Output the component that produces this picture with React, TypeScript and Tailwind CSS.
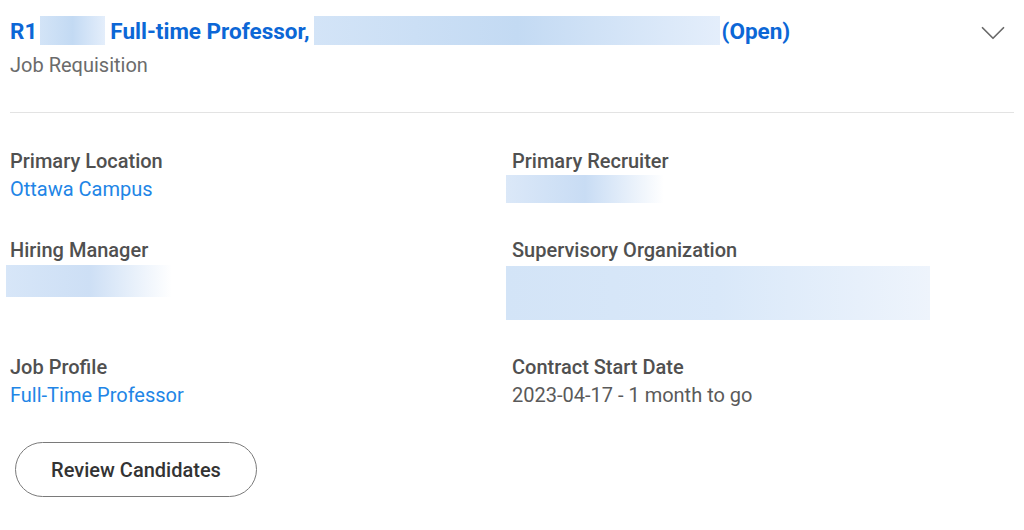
import { ChevronDown } from 'lucide-react';

function Redacted({ className }: { className: string }) {
  return (
    <span
      className={`inline-block bg-linear-to-r from-[#d3e4f7] via-[#c3daf3] to-[#e4eefb] ${className}`}
    />
  );
}

function Field({ label, children }: { label: string; children: React.ReactNode }) {
  return (
    <div className="flex flex-col">
      <p className="text-[20px] font-medium leading-[28px] text-[#505050]">{label}</p>
      {children}
    </div>
  );
}

export default function App() {
  return (
    <div className="w-[1024px] h-[530px] bg-white px-[10px] font-['Roboto',sans-serif]">
      {/* Header */}
      <div className="flex justify-between pt-[16px]">
        <div>
          <h1 className="flex items-center text-[22.5px] font-bold leading-[28px] text-[#0c67d6]">
            <span>R1</span>
            <Redacted className="ml-[3px] mr-[5px] w-[65px] h-[29px]" />
            <span>Full-time Professor,</span>
            <Redacted className="ml-[4px] mr-[2px] w-[406px] h-[29px]" />
            <span>(Open)</span>
          </h1>
          <p className="mt-[6px] text-[20px] leading-[28px] text-[#6b6b6b]">Job Requisition</p>
        </div>
        <ChevronDown size={42} strokeWidth={1} className="-mt-[4px] text-[#6a6a6a]" />
      </div>

      <div className="mt-[33px] h-px bg-[#e3e3e3]" />

      {/* Details */}
      <div className="mt-[34px] grid grid-cols-2 gap-y-[33px]">
        <Field label="Primary Location">
          <span className="text-[20px] leading-[28px] text-[#2185e6]">Ottawa Campus</span>
        </Field>
        <Field label="Primary Recruiter">
          <Redacted className="-ml-[6px] w-[158px] h-[28px] bg-linear-to-r from-[#dbe8f8] via-[#c8dcf4] to-white" />
        </Field>
        <Field label="Hiring Manager">
          <Redacted className="-ml-[4px] mt-px w-[166px] h-[32px] bg-linear-to-r from-[#d7e6f8] via-[#cddff5] to-white" />
        </Field>
        <Field label="Supervisory Organization">
          <Redacted className="-ml-[6px] mt-[2px] w-[424px] h-[54px] bg-linear-to-br from-[#d3e3f7] via-[#d9e8f9] to-[#eef4fc]" />
        </Field>
        <Field label="Job Profile">
          <span className="text-[20px] leading-[28px] text-[#2185e6]">Full-Time Professor</span>
        </Field>
        <Field label="Contract Start Date">
          <span className="text-[20px] leading-[28px] text-[#5a5a5a]">2023-04-17 - 1 month to go</span>
        </Field>
      </div>

      <button className="mt-[33px] ml-[5px] w-[242px] h-[55px] rounded-full border-[1.5px] border-[#7a7a7a] text-[20px] font-medium text-[#333]">
        Review Candidates
      </button>
    </div>
  );
}
